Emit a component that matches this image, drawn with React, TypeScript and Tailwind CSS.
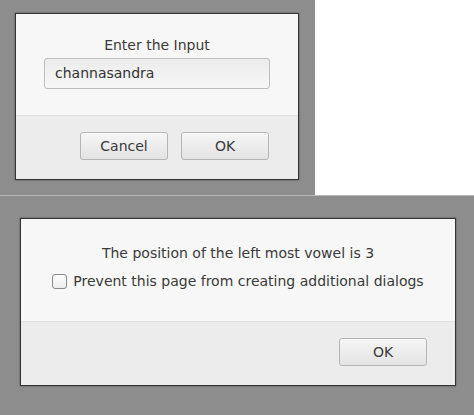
import React from "react";

const font = { fontFamily: '"DejaVu Sans", "Open Sans", sans-serif' };

function Btn({ label, w }: { label: string; w: string }) {
  return (
    <button
      className={`${w} h-[28px] rounded-[3px] border border-[#b5b5b5] bg-gradient-to-b from-[#f6f6f6] to-[#e3e3e3] text-[14px] text-[#3a3a3a] shadow-[inset_0_1px_0_#ffffff]`}
    >
      {label}
    </button>
  );
}

export default function App() {
  return (
    <div className="w-[474px] h-[415px] bg-white flex flex-col text-[#3a3a3a]" style={font}>
      {/* top shot: prompt dialog */}
      <div className="flex h-[195px]">
        <div className="w-[315px] h-full bg-[#8d8d8d] pl-[15px] pt-[13px]">
          <div className="w-[284px] h-[167px] border-[1.5px] border-[#333] bg-[#f7f7f7] flex flex-col shadow-[0_0_2px_rgba(0,0,0,0.4)]">
            <div className="h-[101px] flex flex-col items-center pt-[22px]">
              <div className="text-[14px] leading-[18px]">Enter the Input</div>
              <div className="mt-[4px] w-[226px] h-[31px] rounded-[3px] border border-[#bdbdbd] bg-gradient-to-b from-[#ececec] to-[#f6f6f6] px-[10px] flex items-center text-[14px] text-[#333]">
                channasandra
              </div>
            </div>
            <div className="flex-1 bg-[#ececec] border-t border-[#e0e0e0] flex justify-end items-start pt-[16px] pr-[29px] gap-[13px]">
              <Btn label="Cancel" w="w-[88px]" />
              <Btn label="OK" w="w-[88px]" />
            </div>
          </div>
        </div>
        <div className="flex-1 bg-white" />
      </div>
      <div className="h-px bg-[#b8b8b8]" />
      {/* bottom shot: alert dialog */}
      <div className="flex-1 bg-[#8d8d8d] pl-[20px] pt-[22px]">
        <div className="w-[436px] h-[168px] border-[1.5px] border-[#333] bg-[#f7f7f7] flex flex-col shadow-[0_0_2px_rgba(0,0,0,0.4)]">
          <div className="h-[102px] flex flex-col items-center pt-[25px]">
            <div className="text-[14px] leading-[18px]">The position of the left most vowel is 3</div>
            <label className="mt-[10px] flex items-center gap-[6px] text-[14px] leading-[18px]">
              <span className="w-[15px] h-[15px] rounded-[3px] border border-[#8a8a8a] bg-gradient-to-b from-[#ffffff] to-[#ececec]" />
              Prevent this page from creating additional dialogs
            </label>
          </div>
          <div className="flex-1 bg-[#ececec] border-t border-[#e0e0e0] flex justify-end items-start pt-[16px] pr-[28px]">
            <Btn label="OK" w="w-[88px]" />
          </div>
        </div>
      </div>
    </div>
  );
}
